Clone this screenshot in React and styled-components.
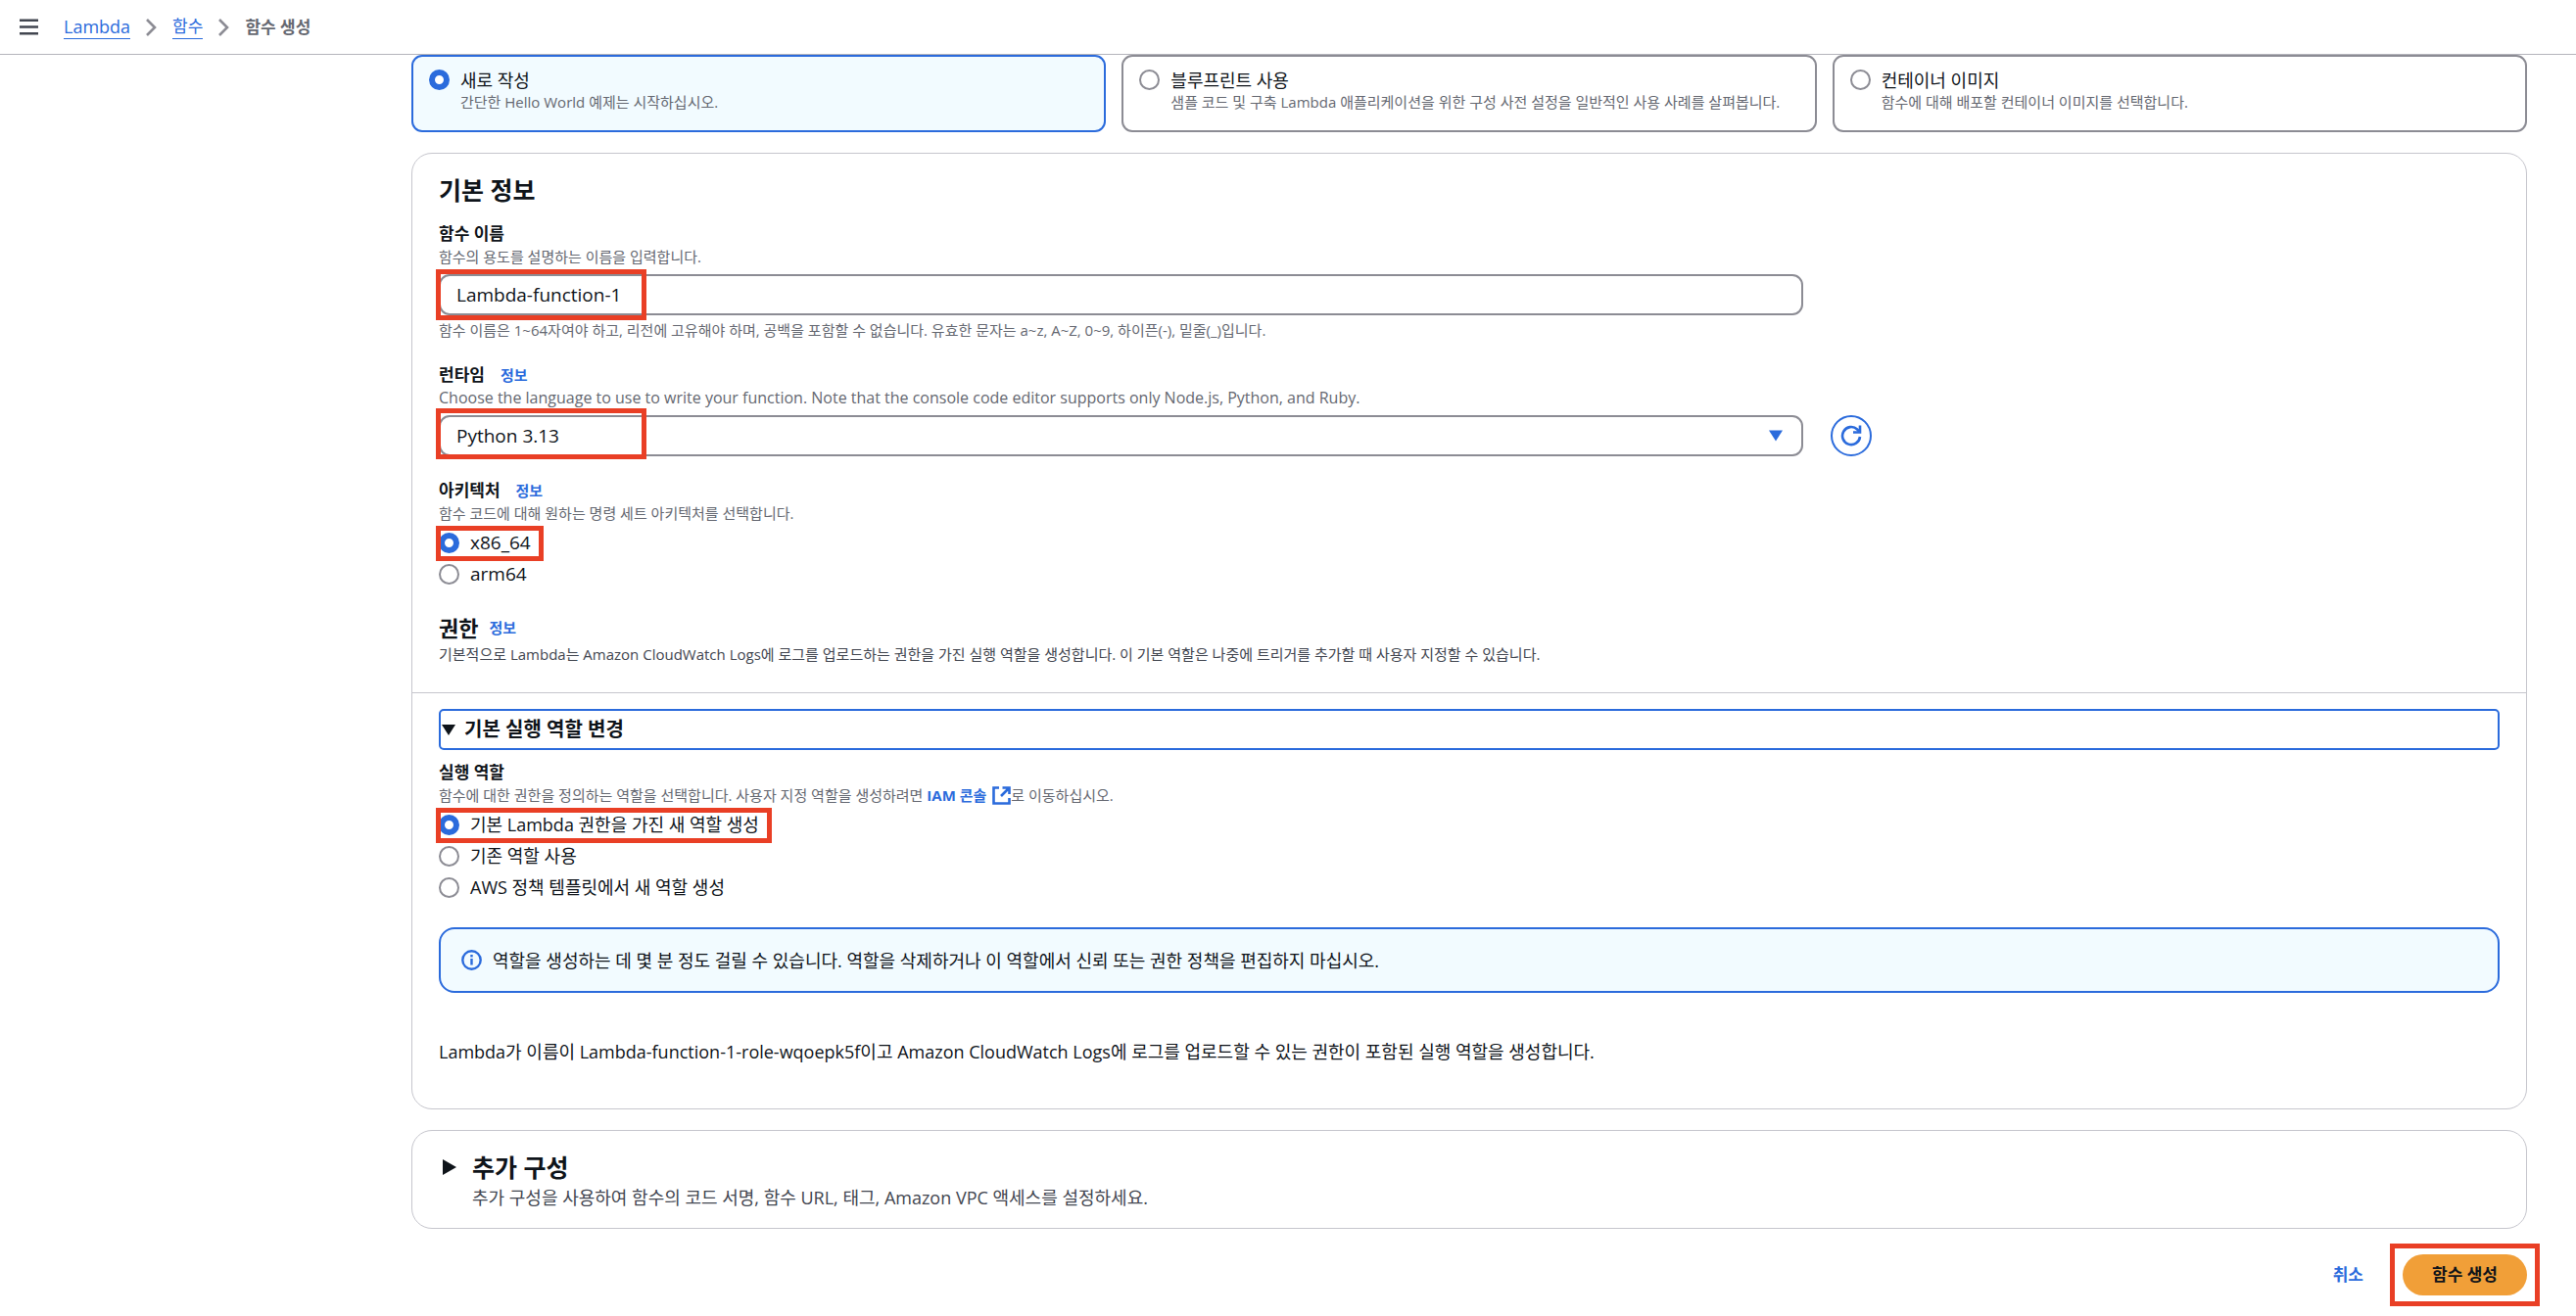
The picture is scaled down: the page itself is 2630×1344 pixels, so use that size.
import React from "react";
import styled, { createGlobalStyle, css } from "styled-components";

const BLUE = "#2b6bdc";
const GRAY = "#8c8c94";
const INK = "#0f141a";
const MUTED = "#656871";
const BORDER = "#c6c6cd";
const RED = "#e93f25";
const TINT = "#f2fbff";

const GlobalStyle = createGlobalStyle`
  *, *::before, *::after { box-sizing: border-box; }
  body {
    margin: 0;
    background: #fff;
    color: ${INK};
    font-family: "Open Sans", "Noto Sans CJK KR", sans-serif;
    font-size: 18px;
    line-height: 28px;
  }
  h1, h2, h3, p, fieldset, ul, ol { margin: 0; padding: 0; border: 0; }
  button, input, select { font: inherit; color: inherit; }
`;

const Header = styled.header`
  display: flex;
  align-items: center;
  height: 56px;
  padding: 0 20px;
  gap: 26px;
  border-bottom: 1px solid #b4b4bb;
`;

const IconButton = styled.button`
  display: flex;
  padding: 0;
  border: 0;
  background: none;
  color: #424650;
  cursor: pointer;
`;

const Crumbs = styled.ol`
  display: flex;
  align-items: center;
  gap: 16px;
  list-style: none;
  color: ${GRAY};
`;

const Crumb = styled.li`
  display: flex;
  align-items: center;
  gap: 16px;
  font-size: 17px;
`;

const CrumbLink = styled.a`
  color: ${BLUE};
  font-size: ${(p) => (p.$latin ? 18 : 17)}px;
  font-weight: ${(p) => (p.$latin ? 500 : 400)};
  text-decoration: none;
  line-height: 24px;
  border-bottom: 1px solid ${BLUE};
`;

const CurrentCrumb = styled.span`
  color: ${MUTED};
  font-weight: 700;
`;

const Main = styled.main`
  display: flex;
  flex-direction: column;
  gap: 21px;
  margin-left: 420px;
  margin-right: 50px;
`;

const Tiles = styled.div`
  display: grid;
  grid-template-columns: repeat(3, 1fr);
  gap: 16px;
`;

const Tile = styled.label`
  display: flex;
  gap: 11px;
  height: 79px;
  padding: 13px 16px;
  border: 2px solid ${(p) => (p.$selected ? BLUE : GRAY)};
  border-radius: 11px;
  background: ${(p) => (p.$selected ? TINT : "#fff")};
`;

const TileText = styled.span`
  display: flex;
  flex-direction: column;
`;

const TileTitle = styled.span`
  line-height: 23px;
`;

const Radio = styled.input.attrs({ type: "radio" })`
  appearance: none;
  flex: none;
  width: 21px;
  height: 21px;
  margin: 0;
  border: 2px solid ${GRAY};
  border-radius: 50%;
  background: #fff;
  &:checked {
    border: 6px solid ${BLUE};
  }
`;

const Hint = styled.span`
  display: block;
  color: ${(p) => (p.$dark ? "#424650" : MUTED)};
  font-size: ${(p) => (p.$latin ? 16 : 15)}px;
  line-height: 20px;
`;

const Panel = styled.section`
  border: 1px solid ${BORDER};
  border-radius: 21px;
`;

const PanelBody = styled.div`
  padding: 20px 27px 29px;
`;

const PanelTitle = styled.h2`
  font-size: 25px;
  line-height: 34px;
  font-weight: 700;
`;

const Subtitle = styled.h3`
  font-size: 22px;
  line-height: 34px;
  font-weight: 700;
`;

const FormGrid = styled.div`
  display: grid;
  grid-template-columns: repeat(12, 1fr);
  column-gap: 28px;
`;

const Field = styled.div`
  grid-column: 1 / span 8;
  padding-top: ${(p) => p.$top}px;
`;

const Side = styled.div`
  display: flex;
  align-items: flex-end;
`;

const LabelRow = styled.div`
  display: flex;
  align-items: center;
  gap: ${(p) => p.$gap || 16}px;
`;

const labelText = css`
  font-size: 17px;
  line-height: 26px;
  font-weight: 700;
`;

const Label = styled.label`
  ${labelText}
  display: block;
`;

const GroupLabel = styled.span`
  ${labelText}
  display: block;
`;

const InfoLink = styled.a`
  color: ${BLUE};
  font-size: 15px;
  line-height: 22px;
  font-weight: 700;
  text-decoration: none;
`;

const ControlBox = styled.div`
  position: relative;
  margin: 8px 0 5px;
`;

const control = css`
  display: block;
  width: 100%;
  height: 42px;
  padding: 0 16px;
  border: 2px solid ${GRAY};
  border-radius: 11px;
  background: #fff;
  font-size: 19px;
`;

const TextInput = styled.input`
  ${control}
`;

const Select = styled.select`
  ${control}
  appearance: none;
`;

const Caret = styled.svg`
  position: absolute;
  right: 20px;
  top: 15px;
  pointer-events: none;
`;

const Highlight = styled.span`
  position: absolute;
  inset: ${(p) => p.$inset || "-5px auto -5px -3px"};
  width: ${(p) => (p.$width ? `${p.$width}px` : "auto")};
  border: 5px solid ${RED};
  pointer-events: none;
`;

const RefreshButton = styled.button`
  display: flex;
  align-items: center;
  justify-content: center;
  width: 42px;
  height: 42px;
  margin-bottom: 5px;
  padding: 0;
  border: 2px solid ${BLUE};
  border-radius: 50%;
  background: #fff;
  color: ${BLUE};
`;

const Options = styled.div`
  display: flex;
  flex-direction: column;
  align-items: flex-start;
  gap: 4px;
  padding-top: 6px;
`;

const Option = styled.label`
  position: relative;
  display: flex;
  align-items: center;
  gap: 11px;
  font-size: ${(p) => (p.$latin ? 19 : 18)}px;
`;

const Permissions = styled.div`
  padding-top: 24px;
`;

const Divided = styled.div`
  display: flex;
  flex-direction: column;
  padding: 16px 27px 44px;
  border-top: 1px solid ${BORDER};
`;

const ExpandButton = styled.button`
  display: flex;
  align-items: center;
  gap: 9px;
  width: 100%;
  height: 42px;
  padding: 0 1px;
  border: 2px solid ${BLUE};
  border-radius: 5px;
  background: #fff;
  font-size: 20px;
  font-weight: 700;
  text-align: left;
`;

const RoleGroup = styled.fieldset`
  padding-top: 10px;
  min-width: 0;
`;

const ExternalLink = styled.a`
  color: ${BLUE};
  font-weight: 700;
  text-decoration: none;
  svg { vertical-align: -4px; margin-left: 6px; }
`;

const Alert = styled.div`
  display: flex;
  align-items: center;
  gap: 11px;
  height: 67px;
  margin-top: 27px;
  padding: 0 21px;
  border: 2px solid ${BLUE};
  border-radius: 16px;
  background: ${TINT};
  svg { color: ${BLUE}; flex: none; }
`;

const Note = styled.p`
  margin-top: 46px;
`;

const ExtraPanel = styled(Panel)`
  display: flex;
  align-items: flex-start;
  gap: 16px;
  padding: 20px 30px 17px;
`;

const DisclosureButton = styled(IconButton)`
  height: 34px;
  align-items: center;
  color: ${INK};
`;

const ExtraText = styled.p`
  color: #424650;
`;

const Footer = styled.footer`
  display: flex;
  justify-content: flex-end;
  align-items: center;
  gap: 40px;
  padding: 5px 0 20px;
`;

const CancelLink = styled.a`
  color: ${BLUE};
  font-size: 17px;
  font-weight: 700;
  text-decoration: none;
`;

const SubmitBox = styled.div`
  position: relative;
`;

const SubmitButton = styled.button`
  display: block;
  height: 42px;
  padding: 0 30px;
  border: 0;
  border-radius: 21px;
  background: #f19f38;
  font-size: 17px;
  font-weight: 700;
`;

const Chevron = () => (
  <svg width="11" height="18" viewBox="0 0 11 18" fill="none" stroke="currentColor" strokeWidth="2.6" aria-hidden="true">
    <path d="M1 1 L9 9 L1 17" />
  </svg>
);

export default function App() {
  return (
    <>
      <GlobalStyle />
      <Header>
        <IconButton type="button" aria-label="메뉴">
          <svg width="19" height="17" viewBox="0 0 19 17" fill="currentColor">
            <path d="M0 0.5h19v2.6H0zM0 7.2h19v2.6H0zM0 13.9h19v2.6H0z" />
          </svg>
        </IconButton>
        <nav>
          <Crumbs>
            <Crumb><CrumbLink href="#lambda" $latin>Lambda</CrumbLink><Chevron /></Crumb>
            <Crumb><CrumbLink href="#functions">함수</CrumbLink><Chevron /></Crumb>
            <Crumb><CurrentCrumb>함수 생성</CurrentCrumb></Crumb>
          </Crumbs>
        </nav>
      </Header>

      <Main>
        <Tiles>
          <Tile $selected>
            <Radio name="author" defaultChecked />
            <TileText>
              <TileTitle>새로 작성</TileTitle>
              <Hint>간단한 Hello World 예제는 시작하십시오.</Hint>
            </TileText>
          </Tile>
          <Tile>
            <Radio name="author" />
            <TileText>
              <TileTitle>블루프린트 사용</TileTitle>
              <Hint>샘플 코드 및 구축 Lambda 애플리케이션을 위한 구성 사전 설정을 일반적인 사용 사례를 살펴봅니다.</Hint>
            </TileText>
          </Tile>
          <Tile>
            <Radio name="author" />
            <TileText>
              <TileTitle>컨테이너 이미지</TileTitle>
              <Hint>함수에 대해 배포할 컨테이너 이미지를 선택합니다.</Hint>
            </TileText>
          </Tile>
        </Tiles>

        <Panel>
          <PanelBody>
            <PanelTitle>기본 정보</PanelTitle>
            <FormGrid>
              <Field $top={15}>
                <Label htmlFor="fn-name">함수 이름</Label>
                <Hint>함수의 용도를 설명하는 이름을 입력합니다.</Hint>
                <ControlBox>
                  <TextInput id="fn-name" type="text" defaultValue="Lambda-function-1" />
                  <Highlight $width={215} />
                </ControlBox>
                <Hint>함수 이름은 1~64자여야 하고, 리전에 고유해야 하며, 공백을 포함할 수 없습니다. 유효한 문자는 a~z, A~Z, 0~9, 하이픈(-), 밑줄(_)입니다.</Hint>
              </Field>
              <Field $top={23}>
                <LabelRow>
                  <Label htmlFor="runtime">런타임</Label>
                  <InfoLink href="#runtime-info">정보</InfoLink>
                </LabelRow>
                <Hint $latin>Choose the language to use to write your function. Note that the console code editor supports only Node.js, Python, and Ruby.</Hint>
                <ControlBox>
                  <Select id="runtime" defaultValue="py313">
                    <option value="py313">Python 3.13</option>
                  </Select>
                  <Caret width="16" height="12" viewBox="0 0 16 12" fill={BLUE}>
                    <path d="M1 0.5h14L8 11.5z" />
                  </Caret>
                  <Highlight $width={215} $inset="-7px auto -3px -3px" />
                </ControlBox>
              </Field>
              <Side>
                <RefreshButton type="button" aria-label="새로 고침">
                  <svg width="22" height="22" viewBox="0 0 22 22" fill="none" stroke="currentColor" strokeWidth="2.6">
                    <path d="M20 12a9 9 0 1 1-2.8-7.5L19.5 6.8" />
                    <path d="M20 0.5v7h-7" />
                  </svg>
                </RefreshButton>
              </Side>
            </FormGrid>
            <Field as="fieldset" $top={17}>
              <LabelRow>
                <GroupLabel>아키텍처</GroupLabel>
                <InfoLink href="#arch-info">정보</InfoLink>
              </LabelRow>
              <Hint>함수 코드에 대해 원하는 명령 세트 아키텍처를 선택합니다.</Hint>
              <Options>
                <Option $latin>
                  <Radio name="arch" defaultChecked />x86_64
                  <Highlight $inset="-3px -13px -5px -3px" />
                </Option>
                <Option $latin><Radio name="arch" />arm64</Option>
              </Options>
            </Field>
            <Permissions>
              <LabelRow $gap={11}>
                <Subtitle>권한</Subtitle>
                <InfoLink href="#permission-info">정보</InfoLink>
              </LabelRow>
              <Hint $dark>기본적으로 Lambda는 Amazon CloudWatch Logs에 로그를 업로드하는 권한을 가진 실행 역할을 생성합니다. 이 기본 역할은 나중에 트리거를 추가할 때 사용자 지정할 수 있습니다.</Hint>
            </Permissions>
          </PanelBody>
          <Divided>
            <ExpandButton type="button" aria-expanded="true">
              <svg width="14" height="11" viewBox="0 0 14 11" fill="currentColor"><path d="M0 0h14L7 11z" /></svg>
              기본 실행 역할 변경
            </ExpandButton>
            <RoleGroup>
              <GroupLabel>실행 역할</GroupLabel>
              <Hint>
                함수에 대한 권한을 정의하는 역할을 선택합니다. 사용자 지정 역할을 생성하려면{" "}
                <ExternalLink href="#iam">
                  IAM 콘솔
                  <svg width="19" height="19" viewBox="0 0 19 19" fill="none" stroke="currentColor" strokeWidth="2.6">
                    <path d="M7 1.5H1.5v16H17.5V12M10.5 1.5h7V8M17 2L9 10" />
                  </svg>
                </ExternalLink>
                로 이동하십시오.
              </Hint>
              <Options>
                <Option>
                  <Radio name="role" defaultChecked />기본 Lambda 권한을 가진 새 역할 생성
                  <Highlight $inset="-3px -13px -5px -3px" />
                </Option>
                <Option><Radio name="role" />기존 역할 사용</Option>
                <Option><Radio name="role" />AWS 정책 템플릿에서 새 역할 생성</Option>
              </Options>
            </RoleGroup>
            <Alert>
              <svg width="21" height="21" viewBox="0 0 21 21" fill="none" stroke="currentColor" strokeWidth="2.4">
                <circle cx="10.5" cy="10.5" r="9.2" />
                <path d="M10.5 9v6.5M10.5 5v2.6" />
              </svg>
              <span>역할을 생성하는 데 몇 분 정도 걸릴 수 있습니다. 역할을 삭제하거나 이 역할에서 신뢰 또는 권한 정책을 편집하지 마십시오.</span>
            </Alert>
            <Note>Lambda가 이름이 Lambda-function-1-role-wqoepk5f이고 Amazon CloudWatch Logs에 로그를 업로드할 수 있는 권한이 포함된 실행 역할을 생성합니다.</Note>
          </Divided>
        </Panel>

        <ExtraPanel>
          <DisclosureButton type="button" aria-expanded="false" aria-label="추가 구성 펼치기">
            <svg width="15" height="16" viewBox="0 0 15 16" fill="currentColor"><path d="M1 0L15 8L1 16z" /></svg>
          </DisclosureButton>
          <div>
            <PanelTitle>추가 구성</PanelTitle>
            <ExtraText>추가 구성을 사용하여 함수의 코드 서명, 함수 URL, 태그, Amazon VPC 액세스를 설정하세요.</ExtraText>
          </div>
        </ExtraPanel>

        <Footer>
          <CancelLink href="#cancel">취소</CancelLink>
          <SubmitBox>
            <SubmitButton type="button">함수 생성</SubmitButton>
            <Highlight $inset="-11px -13px" />
          </SubmitBox>
        </Footer>
      </Main>
    </>
  );
}
